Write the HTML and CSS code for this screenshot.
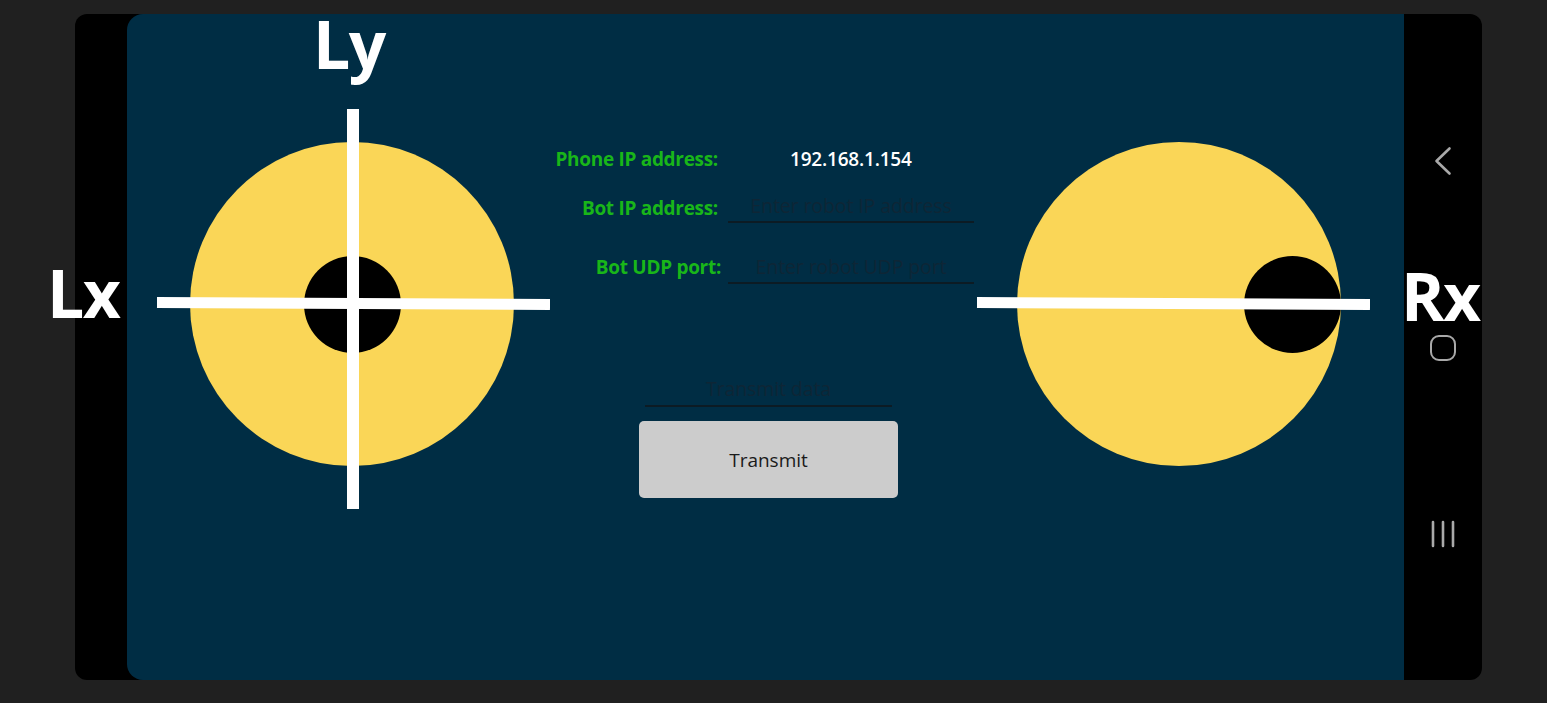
FILE: index.html
```html
<!DOCTYPE html>
<html>
<head>
<meta charset="utf-8">
<link rel="stylesheet" href="styles.css">
</head>
<body>
<div class="phone">
  <div class="bezel"></div>
  <div class="screen">
    <div class="joy">
      <div class="pad"><div class="knob"></div></div>
      <div class="hline hline-left"></div>
      <div class="vline"></div>
    </div>
    <div class="center">
      <div class="form">
        <div class="row row-phone">
          <span class="label">Phone IP address:</span>
          <span class="value">192.168.1.154</span>
        </div>
        <div class="row row-bot">
          <span class="label">Bot IP address:</span>
          <span class="field"><span class="ph">Enter robot IP address</span></span>
        </div>
        <div class="row row-port">
          <span class="label">Bot UDP port:</span>
          <span class="field"><span class="ph">Enter robot UDP port</span></span>
        </div>
      </div>
      <div class="tx">
        <div class="txfield"><span class="ph">Transmit data</span></div>
        <div class="btn">Transmit</div>
      </div>
    </div>
    <div class="joy">
      <div class="pad"><div class="knob knob-right"></div></div>
      <div class="hline hline-right"></div>
    </div>
  </div>
  <div class="nav">
    <svg class="nav-back" width="20" height="30" viewBox="0 0 20 30"><path d="M16.5 2.5 L3.5 15 L16.5 27.5" fill="none" stroke="#a9a9a9" stroke-width="2.6" stroke-linecap="round" stroke-linejoin="round"/></svg>
    <div class="nav-home"></div>
    <svg class="nav-recent" width="26" height="28" viewBox="0 0 26 28"><path d="M3 2 V26 M13 2 V26 M23 2 V26" stroke="#a9a9a9" stroke-width="2.6" stroke-linecap="round"/></svg>
  </div>
  <span class="tag tag-ly">Ly</span>
  <span class="tag tag-lx">Lx</span>
  <span class="tag tag-rx">Rx</span>
</div>
</body>
</html>
```

FILE: styles.css
```css
html, body {
  margin: 0;
  padding: 0;
}
body {
  background: #202020;
  width: 1547px;
  height: 703px;
  overflow: hidden;
  padding: 14px 0 0 75px;
  box-sizing: border-box;
  font-family: "Open Sans", "Noto Sans", sans-serif;
}
.phone {
  position: relative;
  width: 1407px;
  height: 666px;
  background: #000;
  border-radius: 12px;
  display: flex;
}
.bezel {
  width: 52px;
  flex: none;
}
.screen {
  width: 1277px;
  flex: none;
  background: #002d44;
  border-radius: 16px 0 0 16px;
  display: flex;
  padding: 128px 63px 0 63px;
  box-sizing: border-box;
}
.nav {
  width: 78px;
  flex: none;
  display: flex;
  flex-direction: column;
  align-items: center;
  padding-top: 132px;
  box-sizing: border-box;
}
.nav-home {
  width: 26px;
  height: 26px;
  box-sizing: border-box;
  border: 2.6px solid #a9a9a9;
  border-radius: 9px;
  margin-top: 159px;
}
.nav-recent { margin-top: 159px; }

.joy {
  position: relative;
  width: 324px;
  height: 324px;
  flex: none;
}
.pad {
  width: 324px;
  height: 324px;
  border-radius: 50%;
  background: #fad657;
  display: flex;
  align-items: center;
  justify-content: center;
}
.knob {
  width: 97px;
  height: 97px;
  border-radius: 50%;
  background: #000;
}
.knob-right {
  transform: translateX(113px);
}
.hline {
  position: absolute;
  height: 11px;
  background: #fff;
  top: 156px;
  transform: rotate(0.3deg);
}
.hline-left {
  left: -33px;
  width: 393px;
}
.hline-right {
  left: -40px;
  width: 393px;
}
.vline {
  position: absolute;
  left: 157px;
  top: -33px;
  width: 12px;
  height: 400px;
  background: #fff;
}

.center {
  flex: 1;
  display: flex;
  flex-direction: column;
}
.form {
  margin-top: 4px;
  margin-left: 4px;
  display: flex;
  flex-direction: column;
}
.row {
  display: flex;
  align-items: flex-end;
}
.label {
  width: 200px;
  text-align: right;
  color: #19b619;
  font-weight: 700;
  font-size: 19px;
  line-height: 26px;
  white-space: nowrap;
  letter-spacing: -0.3px;
}
.value {
  color: #fff;
  font-weight: 600;
  font-size: 19px;
  line-height: 26px;
  margin-left: 72px;
  letter-spacing: -0.2px;
}
.row-bot { margin-top: 21px; }
.row-bot .label { padding-bottom: 2px; }
.row-port { margin-top: 31px; }
.row-port .label { width: 203px; padding-bottom: 4px; }
.field {
  margin-left: 10px;
  width: 246px;
  border-bottom: 2px solid #0c1b24;
  display: flex;
  justify-content: center;
  padding-bottom: 2px;
}
.row-port .field { margin-left: 7px; }
.ph {
  color: #0e2636;
  font-size: 19.5px;
  line-height: 26px;
  letter-spacing: -0.1px;
}

.tx {
  margin-top: 92px;
  margin-left: 6px;
  display: flex;
  flex-direction: column;
  align-items: center;
}
.txfield {
  width: 247px;
  border-bottom: 2px solid #0c1b24;
  text-align: center;
  padding-bottom: 3px;
}
.btn {
  margin-top: 14px;
  width: 259px;
  height: 77px;
  background: #cccccc;
  border-radius: 5px;
  display: flex;
  align-items: center;
  justify-content: center;
  color: #1a1a1a;
  font-size: 19px;
  font-weight: 500;
}

.tag {
  position: absolute;
  color: #fff;
  font-family: "Open Sans", sans-serif;
  font-weight: 700;
  font-size: 66px;
  line-height: 1;
  letter-spacing: -1.5px;
}
.tag-ly { left: 238px; top: -4px; }
.tag-lx { left: -28px; top: 245px; }
.tag-rx { left: 1326px; top: 248px; }
```
